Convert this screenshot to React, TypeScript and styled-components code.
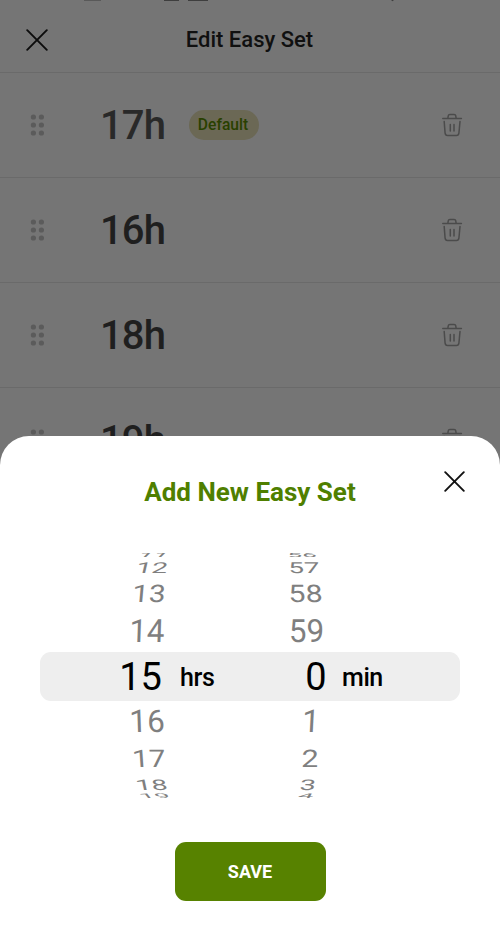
import React from "react";
import styled, { createGlobalStyle } from "styled-components";

const GlobalStyle = createGlobalStyle`
  * { box-sizing: border-box; }
  body { margin: 0; background: #757575; font-family: Roboto, "Liberation Sans", sans-serif; }
  button { font: inherit; border: 0; padding: 0; background: none; }
`;

const Screen = styled.div`
  position: relative;
  width: 500px;
  height: 936px;
  overflow: hidden;
  background: #757575;
`;

const StatusBar = styled.svg`
  display: block;
  width: 500px;
  height: 3px;
`;

const Header = styled.header`
  display: grid;
  grid-template-columns: 74px 1fr 74px;
  align-items: center;
  height: 70px;
  padding-top: 4px;
  border-bottom: 1px solid #6a6a6a;
`;

const Title = styled.h1`
  margin: 1px 1px 0 0;
  font-size: 22px;
  line-height: 26px;
  font-weight: 500;
  text-align: center;
  color: #101010;
`;

const IconButton = styled.button`
  display: flex;
  justify-content: center;
  align-items: center;
`;

const Row = styled.div`
  display: flex;
  align-items: center;
  height: 105px;
  padding: 0 37px 0 30px;
  border-bottom: 1px solid #6a6a6a;
`;

const Hours = styled.span<{ $soft?: boolean }>`
  margin-left: 56px;
  padding-top: 2px;
  width: 65px;
  font-size: 40px;
  line-height: 48px;
  font-weight: 500;
  letter-spacing: -0.9px;
  white-space: nowrap;
  color: ${(p) => (p.$soft ? "#292929" : "#1f1f1f")};
`;

const Badge = styled.span`
  margin-left: 24px;
  width: 70px;
  height: 30px;
  border-radius: 15px;
  background: #6b6855;
  color: #294000;
  font-size: 15.6px;
  line-height: 31px;
  font-weight: 500;
  text-align: center;
  padding-right: 2px;
`;

const Trash = styled.svg`
  margin-left: auto;
`;

const Sheet = styled.section`
  position: absolute;
  left: 0;
  right: 0;
  bottom: 0;
  height: 500px;
  border-radius: 29px 29px 0 0;
  background: #fff;
  display: flex;
  flex-direction: column;
  align-items: center;
`;

const SheetHeader = styled.div`
  display: grid;
  grid-template-columns: 90px 1fr 90px;
  width: 100%;
  height: 116px;
`;

const SheetTitle = styled.h2`
  margin: 41px 0 0;
  font-size: 26px;
  line-height: 30px;
  font-weight: 700;
  text-align: center;
  color: #4f7f00;
`;

const CloseSheet = styled(IconButton)`
  height: 90px;
  padding-right: 1px;
`;

const Wheel = styled.div`
  width: 420px;
  height: 247px;
  overflow: hidden;
`;

const WheelRow = styled.div<{ $h: number; $active?: boolean }>`
  display: grid;
  grid-template-columns: 66px 93px 69px 1fr;
  align-items: center;
  height: ${(p) => p.$h}px;
  padding-left: 74px;
  border-radius: 11px;
  background: ${(p) => (p.$active ? "#eee" : "transparent")};
`;

const Digit = styled.span<{ $x: number; $sx: number; $sy: number; $skew: number; $active?: boolean }>`
  width: 66px;
  height: 0;
  line-height: 0;
  text-align: center;
  font-size: ${(p) => (p.$active ? 38 : 32)}px;
  font-weight: 400;
  color: ${(p) => (p.$active ? "#000" : "#7f7f7f")};
  transform: translateX(${(p) => p.$x}px) skewX(${(p) => p.$skew}deg) scale(${(p) => p.$sx}, ${(p) => p.$sy});
`;

const Unit = styled.span`
  font-size: 25px;
  line-height: 30px;
  font-weight: 500;
  letter-spacing: -0.4px;
  padding-top: 3px;
  color: #000;
`;

const Save = styled.button`
  margin-top: 43px;
  width: 151px;
  height: 59px;
  border-radius: 11px;
  background: #578200;
  color: #fff;
  font-size: 18px;
  font-weight: 700;
  line-height: 59px;
`;

const Cross = ({ size, color }: { size: number; color: string }) => (
  <svg width={size} height={size} viewBox={`0 0 ${size} ${size}`}>
    <path
      d={`M1.2 1.2L${size - 1.2} ${size - 1.2}M${size - 1.2} 1.2L1.2 ${size - 1.2}`}
      stroke={color}
      strokeWidth="1.9"
      strokeLinecap="round"
    />
  </svg>
);

const Grip = () => (
  <svg width="14" height="22" viewBox="0 0 14 22" fill="#5b5b5b">
    {[3, 11].map((x) => [3, 11, 19].map((y) => <circle key={`${x}-${y}`} cx={x + 0.4} cy={y} r="2.6" />))}
  </svg>
);

const TrashIcon = () => (
  <Trash width="22" height="24" viewBox="0 0 22 24" fill="none" stroke="#4b4b4b" strokeWidth="1.5" strokeLinecap="round" strokeLinejoin="round">
    <path d="M1.8 5.6H20.4M6.8 5.4L7.3 2.7Q7.5 1.5 8.8 1.5H13.2Q14.5 1.5 14.7 2.7L15.2 5.4" />
    <path d="M3.2 8.6L4.1 20.2Q4.4 22.4 6.4 22.4H15.6Q17.6 22.4 17.9 20.2L19 8.6M9.3 11.5V18M13 11.5V18" />
  </Trash>
);

const presets = [
  { label: "17h", isDefault: true },
  { label: "16h" },
  { label: "18h" },
  { label: "19h" },
];

type Face = { text: string; x: number; skew: number; sx: number };
const wheel: { h: number; sy: number; hrs: Face; min: Face; active?: boolean }[] = [
  { h: 6, sy: 0.18, hrs: { text: "11", x: 6.5, skew: -45, sx: 0.84 }, min: { text: "56", x: -4, skew: 12, sx: 0.82 } },
  { h: 20, sy: 0.47, hrs: { text: "12", x: 5, skew: -13, sx: 0.88 }, min: { text: "57", x: -2, skew: 5, sx: 0.87 } },
  { h: 32, sy: 0.76, hrs: { text: "13", x: 2, skew: -5, sx: 0.93 }, min: { text: "58", x: -0.5, skew: 3, sx: 0.95 } },
  { h: 42, sy: 1, hrs: { text: "14", x: 0, skew: -2, sx: 0.98 }, min: { text: "59", x: 0.5, skew: 1, sx: 0.98 } },
  { h: 49, sy: 1, active: true, hrs: { text: "15", x: -6.5, skew: 0, sx: 1 }, min: { text: "0", x: 10, skew: 0, sx: 1 } },
  { h: 40, sy: 0.98, hrs: { text: "16", x: 0, skew: 2, sx: 0.98 }, min: { text: "1", x: 5, skew: -3, sx: 0.98 } },
  { h: 35, sy: 0.76, hrs: { text: "17", x: 2, skew: 4, sx: 0.93 }, min: { text: "2", x: 4, skew: -3, sx: 0.95 } },
  { h: 17, sy: 0.46, hrs: { text: "18", x: 4.5, skew: 12, sx: 0.89 }, min: { text: "3", x: 2, skew: -9, sx: 0.9 } },
  { h: 6, sy: 0.2, hrs: { text: "19", x: 7.5, skew: 38, sx: 0.84 }, min: { text: "4", x: 0, skew: -28, sx: 0.85 } },
];

export default function App() {
  return (
    <>
      <GlobalStyle />
      <Screen>
        <StatusBar viewBox="0 0 500 3" fill="#3e3e3e">
          <path d="M84 0H101V0.5H84ZM164 0H179V1.1H164ZM188 0H208V1.1H188ZM391 0H394L392.5 1.2Z" />
        </StatusBar>
        <Header>
          <IconButton aria-label="Close">
            <Cross size={22} color="#0c0c0c" />
          </IconButton>
          <Title>Edit Easy Set</Title>
        </Header>
        {presets.map((p) => (
          <Row key={p.label}>
            <Grip />
            <Hours $soft={p.isDefault}>{p.label}</Hours>
            {p.isDefault && <Badge>Default</Badge>}
            <TrashIcon />
          </Row>
        ))}
        <Sheet>
          <SheetHeader>
            <span />
            <SheetTitle>Add New Easy Set</SheetTitle>
            <CloseSheet aria-label="Close">
              <Cross size={21} color="#111" />
            </CloseSheet>
          </SheetHeader>
          <Wheel>
            {wheel.map((r) => (
              <WheelRow key={r.hrs.text} $h={r.h} $active={r.active}>
                <Digit $x={r.hrs.x} $sx={r.hrs.sx} $sy={r.sy} $skew={r.hrs.skew} $active={r.active}>{r.hrs.text}</Digit>
                {r.active ? <Unit>hrs</Unit> : <span />}
                <Digit $x={r.min.x} $sx={r.min.sx} $sy={r.sy} $skew={r.min.skew} $active={r.active}>{r.min.text}</Digit>
                {r.active && <Unit>min</Unit>}
              </WheelRow>
            ))}
          </Wheel>
          <Save>SAVE</Save>
        </Sheet>
      </Screen>
    </>
  );
}
